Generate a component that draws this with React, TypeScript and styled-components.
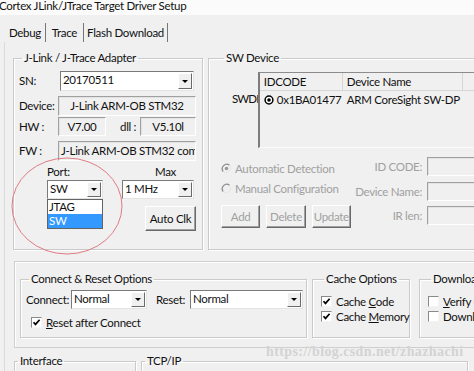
import React from 'react';
import styled, {createGlobalStyle} from 'styled-components';

const GlobalStyle = createGlobalStyle`
  html, body {
    margin: 0;
    padding: 0;
    background: #f0f0f0;
  }
`

const Screen = styled.div`
  position: relative;
  width: 474px;
  height: 371px;
  overflow: hidden;
  background: #f0f0f0;
  color: #111;
  font-family: Lato, "Noto Sans", sans-serif;
  font-size: 11.5px;
  letter-spacing: -0.3px;
`
const TitleBar = styled.div`
  height: 15px;
  line-height: 12px;
  background: #fbfbfb;
  text-indent: -1px;
  white-space: nowrap;
`
const TabStrip = styled.div`
  display: flex;
  align-items: flex-end;
  height: 27px;
  padding-left: 5px;
`
const Tab = styled.div<{$w: number}>`
  width: ${p => p.$w}px;
  height: 19px;
  line-height: 19px;
  text-align: center;
  border-right: 1px solid #767676;
  white-space: nowrap;
  box-sizing: border-box;
`
const Panel = styled.div`
  margin-left: 4px;
  padding: 9px 0 0 8px;
  border-left: 1px solid #dadada;
`
const Row = styled.div<{$gap?: number; $top?: number; $left?: number}>`
  display: flex;
  align-items: flex-start;
  gap: ${p => p.$gap ?? 0}px;
  margin-top: ${p => p.$top ?? 0}px;
  margin-left: ${p => p.$left ?? 0}px;
`
const Group = styled.fieldset<{$w: number; $h: number; $pad: string; $ml?: number}>`
  flex-shrink: 0;
  box-sizing: border-box;
  width: ${p => p.$w}px;
  height: ${p => p.$h}px;
  margin: 0 0 0 ${p => p.$ml ?? 0}px;
  padding: ${p => p.$pad};
  min-width: 0;
  border: 1px solid #cacaca;
  box-shadow: inset 1px 1px 0 #fff, 1px 1px 0 #fff;
`
const Legend = styled.legend`
  margin-left: 3px;
  padding: 0 2px;
  line-height: 14px;
  white-space: nowrap;
`
const InfoGrid = styled.div`
  display: grid;
  grid-template-columns: 39px 1fr;
  grid-template-rows: 25px 21px 24px 20px;
  align-items: start;
`
const Label = styled.span<{$w?: number; $h?: number; $ml?: number}>`
  display: inline-block;
  ${p => (p.$w ? `width: ${p.$w}px;` : '')}
  margin-left: ${p => p.$ml ?? 0}px;
  line-height: ${p => p.$h ?? 20}px;
  white-space: nowrap;
  flex-shrink: 0;
`
const ReadField = styled.div<{$w: number; $h?: number; $center?: boolean}>`
  box-sizing: border-box;
  width: ${p => p.$w}px;
  height: ${p => p.$h ?? 20}px;
  line-height: ${p => (p.$h ?? 20) - 2}px;
  padding: 0 2px;
  text-align: ${p => (p.$center ? 'center' : 'left')};
  border: 1px solid;
  border-color: #a0a0a0 #ffffff #ffffff #a0a0a0;
  box-shadow: inset 1px 1px 0 #e3e3e3;
  overflow: hidden;
  white-space: nowrap;
  flex-shrink: 0;
`
const ComboBox = styled.div<{$w: number; $h: number; $ml?: number}>`
  box-sizing: border-box;
  display: flex;
  width: ${p => p.$w}px;
  height: ${p => p.$h}px;
  margin-left: ${p => p.$ml ?? 0}px;
  background: #fff;
  border: 1px solid;
  border-color: #7a7a7a #e3e3e3 #e3e3e3 #7a7a7a;
  flex-shrink: 0;
`
const ComboText = styled.div`
  flex: 1;
  padding-left: 2px;
  line-height: 16px;
  white-space: nowrap;
  overflow: hidden;
`
const ComboButton = styled.div`
  box-sizing: border-box;
  width: 14px;
  margin: 1px;
  background: #f0f0f0;
  border: 1px solid;
  border-color: #ffffff #696969 #696969 #ffffff;
  display: flex;
  align-items: center;
  justify-content: center;
`
const Arrow = styled.div`
  width: 0;
  height: 0;
  border-left: 3px solid transparent;
  border-right: 3px solid transparent;
  border-top: 3px solid #000;
`
const PortGrid = styled.div`
  display: grid;
  grid-template-columns: 56px 72px;
  grid-template-rows: 14px 19px 25px;
  column-gap: 19px;
  row-gap: 1px;
  margin: 4px 0 0 28px;
`
const SmallLabel = styled.span<{$ml?: number}>`
  line-height: 14px;
  margin-left: ${p => p.$ml ?? 0}px;
`
const PortCell = styled.div`
  position: relative;
`
const DropList = styled.div`
  position: absolute;
  top: 100%;
  left: 0;
  z-index: 2;
  box-sizing: border-box;
  width: 56px;
  background: #fff;
  border: 1px solid #646464;
`
const DropItem = styled.div<{$selected?: boolean}>`
  height: 14px;
  line-height: 14px;
  padding-left: 1px;
  background: ${p => (p.$selected ? '#3399ff' : '#fff')};
  color: ${p => (p.$selected ? '#fff' : '#111')};
`
const WinButton = styled.button<{$w: number; $h: number; $ml?: number; $mt?: number}>`
  box-sizing: border-box;
  width: ${p => p.$w}px;
  height: ${p => p.$h}px;
  margin: ${p => p.$mt ?? 0}px 0 0 ${p => p.$ml ?? 0}px;
  padding: 0;
  font: inherit;
  letter-spacing: inherit;
  color: #111;
  background: #f0f0f0;
  border: 1px solid;
  border-color: #ffffff #696969 #696969 #ffffff;
  box-shadow: inset -1px -1px 0 #a0a0a0;
  &:disabled {
    color: #a0a0a0;
  }
`
const DeviceRow = styled.div`
  display: flex;
  margin-left: 10px;
`
const SwdLabel = styled.div`
  width: 28px;
  overflow: hidden;
  padding: 18px 0 0 1px;
  box-sizing: border-box;
  line-height: 17px;
  letter-spacing: -0.9px;
  white-space: nowrap;
`
const Table = styled.div`
  box-sizing: border-box;
  width: 260px;
  height: 76px;
  border-top: 1px solid #8c8c8c;
  border-left: 2px solid #7c7c7c;
  border-bottom: 1px solid #fafafa;
`
const TableRow = styled.div<{$head?: boolean}>`
  display: grid;
  grid-template-columns: 83px 120px 1fr;
  height: ${p => (p.$head ? 17 : 18)}px;
  line-height: ${p => (p.$head ? 16 : 18)}px;
  ${p => (p.$head ? 'border-bottom: 1px solid #d6d6d6;' : '')}
`
const Cell = styled.div<{$head?: boolean}>`
  display: flex;
  align-items: center;
  gap: 3px;
  padding-left: 4px;
  white-space: nowrap;
  overflow: hidden;
  ${p => (p.$head ? 'border-right: 1px solid #d6d6d6;' : '')}
`
const ConfigRow = styled.div`
  display: flex;
  align-items: flex-start;
  margin-top: 9px;
`
const ConfigLeft = styled.div`
  width: 130px;
  flex-shrink: 0;
  color: #a0a0a0;
`
const RadioRow = styled.div<{$mt?: number}>`
  display: flex;
  align-items: center;
  gap: 3px;
  height: 20px;
  margin-top: ${p => p.$mt ?? 0}px;
  white-space: nowrap;
`
const ButtonRow = styled.div`
  display: flex;
  gap: 6px;
  margin-top: 7px;
`
const ConfigGrid = styled.div`
  flex: 1;
  display: grid;
  grid-template-columns: 71px 1fr;
  grid-template-rows: 25px 24px 19px;
  column-gap: 5px;
  align-items: start;
`
const RightLabel = styled.span`
  text-align: right;
  line-height: 19px;
  white-space: nowrap;
  color: #a0a0a0;
`
const EmptyField = styled.div`
  height: 19px;
  box-sizing: border-box;
  border: 1px solid;
  border-color: #a0a0a0 #ffffff #ffffff #a0a0a0;
  box-shadow: inset 1px 1px 0 #e3e3e3;
`
const OptionsFrame = styled.div`
  display: flex;
  align-items: flex-start;
  box-sizing: border-box;
  width: 480px;
  height: 87px;
  margin: 11px 0 0 1px;
  padding: 10px 0 0 5px;
  border: 1px solid #cfcfcf;
  box-shadow: inset 1px 1px 0 #fff;
`
const LineRow = styled.div<{$h?: number; $mt?: number; $ml?: number}>`
  display: flex;
  align-items: center;
  height: ${p => p.$h ?? 15}px;
  margin-top: ${p => p.$mt ?? 0}px;
  margin-left: ${p => p.$ml ?? 0}px;
  white-space: nowrap;
`
const CheckBox = styled.span`
  box-sizing: border-box;
  display: inline-flex;
  align-items: center;
  justify-content: center;
  width: 11px;
  height: 11px;
  margin-right: 4px;
  background: #fff;
  border: 1px solid;
  border-color: #8a8a8a #f4f4f4 #f4f4f4 #8a8a8a;
  flex-shrink: 0;
`
const Ellipse = styled.svg`
  position: absolute;
  left: 0;
  top: 0;
  pointer-events: none;
  z-index: 3;
`
const Watermark = styled.div`
  position: absolute;
  left: 266px;
  top: 344px;
  font-family: "Liberation Serif", serif;
  font-weight: bold;
  font-size: 14px;
  letter-spacing: 0.4px;
  color: #d3d3d3;
  white-space: nowrap;
`
const U = styled.span`
  text-decoration: underline;
`

const Combo = ({value, w, h = 20, ml}: {value: string; w: number; h?: number; ml?: number}) => (
  <ComboBox $w={w} $h={h} $ml={ml}>
    <ComboText>{value}</ComboText>
    <ComboButton><Arrow /></ComboButton>
  </ComboBox>
)

const Check = ({checked}: {checked?: boolean}) => (
  <CheckBox>
    {checked && (
      <svg width="9" height="9" viewBox="0 0 9 9">
        <path d="M1.5 4.2 L3.5 6.4 L7.6 1.8" fill="none" stroke="#000" strokeWidth="1.7" />
      </svg>
    )}
  </CheckBox>
)

const Radio = ({checked}: {checked?: boolean}) => (
  <svg width="11" height="11" viewBox="0 0 11 11">
    <path d="M8.5 2.2 A4.5 4.5 0 0 0 2.2 8.5" fill="none" stroke="#8e8e8e" strokeWidth="1.3" />
    <path d="M8.8 2.5 A4.5 4.5 0 0 1 2.5 8.8" fill="none" stroke="#e6e6e6" strokeWidth="1" />
    {checked && <circle cx="5.5" cy="5.5" r="1.8" fill="#9a9a9a" />}
  </svg>
)

const Selected = () => (
  <svg width="10" height="10" viewBox="0 0 10 10">
    <circle cx="5" cy="5" r="3.9" fill="#fff" stroke="#000" strokeWidth="1.5" />
    <circle cx="5" cy="5" r="1.8" fill="#000" />
  </svg>
)

export default function App() {
  return (
    <Screen>
      <GlobalStyle />
      <TitleBar>Cortex JLink/JTrace Target Driver Setup</TitleBar>
      <TabStrip>
        <Tab $w={41}>Debug</Tab>
        <Tab $w={38}>Trace</Tab>
        <Tab $w={84}>Flash Download</Tab>
      </TabStrip>
      <Panel>
        <Row $gap={5}>
          <Group $w={190} $h={199} $pad="6px 5px 0 5px">
            <Legend>J-Link / J-Trace Adapter</Legend>
            <InfoGrid>
              <Label>SN:</Label>
              <Combo value="20170511" w={134} ml={2} />
              <Label>Device:</Label>
              <ReadField $w={138} $center>J-Link ARM-OB STM32</ReadField>
              <Label $h={19}>HW :</Label>
              <LineRow $h={19}>
                <ReadField $w={48} $h={19} $center>V7.00</ReadField>
                <Label $w={20} $h={19} $ml={14}>dll :</Label>
                <ReadField $w={56} $h={19} $center>V5.10l</ReadField>
              </LineRow>
              <Label>FW :</Label>
              <ReadField $w={138}>J-Link ARM-OB STM32 compiled</ReadField>
            </InfoGrid>
            <PortGrid>
              <SmallLabel>Port:</SmallLabel>
              <SmallLabel $ml={33}>Max</SmallLabel>
              <PortCell>
                <Combo value="SW" w={56} h={19} />
                <DropList>
                  <DropItem>JTAG</DropItem>
                  <DropItem $selected>SW</DropItem>
                </DropList>
              </PortCell>
              <Combo value="1 MHz" w={72} h={19} />
              <span />
              <WinButton $w={51} $h={25} $ml={23} $mt={6}>Auto Clk</WinButton>
            </PortGrid>
          </Group>

          <Group $w={300} $h={199} $pad="7px 0 0 12px">
            <Legend>SW Device</Legend>
            <DeviceRow>
              <SwdLabel>SWDIO</SwdLabel>
              <Table>
                <TableRow $head>
                  <Cell $head>IDCODE</Cell>
                  <Cell $head>Device Name</Cell>
                  <Cell />
                </TableRow>
                <TableRow>
                  <Cell><Selected />0x1BA01477</Cell>
                  <Cell>ARM CoreSight SW-DP</Cell>
                  <Cell />
                </TableRow>
              </Table>
            </DeviceRow>
            <ConfigRow>
              <ConfigLeft>
                <RadioRow $mt={1}><Radio checked />Automatic Detection</RadioRow>
                <RadioRow><Radio />Manual Configuration</RadioRow>
                <ButtonRow>
                  <WinButton $w={45} $h={23} disabled>Add</WinButton>
                  <WinButton $w={45} $h={23} disabled>Delete</WinButton>
                  <WinButton $w={45} $h={23} disabled>Update</WinButton>
                </ButtonRow>
              </ConfigLeft>
              <ConfigGrid>
                <RightLabel>ID CODE:</RightLabel>
                <EmptyField />
                <RightLabel>Device Name:</RightLabel>
                <EmptyField />
                <RightLabel>IR len:</RightLabel>
                <EmptyField />
              </ConfigGrid>
            </ConfigRow>
          </Group>
        </Row>

        <OptionsFrame>
          <Group $w={287} $h={66} $pad="4px 5px 0 5px">
            <Legend>Connect &amp; Reset Options</Legend>
            <LineRow $h={19}>
              <Label $w={45} $h={19}>Connect:</Label>
              <Combo value="Normal" w={76} h={19} />
              <Label $w={34} $h={19} $ml={9}>Reset:</Label>
              <Combo value="Normal" w={113} h={19} />
            </LineRow>
            <LineRow $mt={6} $ml={5}>
              <Check checked /><span><U>R</U>eset after Connect</span>
            </LineRow>
          </Group>
          <Group $w={98} $h={66} $pad="8px 0 0 8px" $ml={5}>
            <Legend>Cache Options</Legend>
            <LineRow><Check checked /><span>Cache <U>C</U>ode</span></LineRow>
            <LineRow><Check checked /><span>Cache <U>M</U>emory</span></LineRow>
          </Group>
          <Group $w={120} $h={66} $pad="8px 0 0 8px" $ml={9}>
            <Legend>Download Options</Legend>
            <LineRow><Check /><span><U>V</U>erify Code Download</span></LineRow>
            <LineRow><Check /><span>Download to Flash</span></LineRow>
          </Group>
        </OptionsFrame>

        <Row $gap={5} $top={6} $left={1}>
          <Group $w={122} $h={60} $pad="0">
            <Legend>Interface</Legend>
          </Group>
          <Group $w={327} $h={60} $pad="0">
            <Legend>TCP/IP</Legend>
          </Group>
        </Row>
      </Panel>

      <Ellipse width="474" height="371" viewBox="0 0 474 371">
        <ellipse cx="67" cy="206" rx="55" ry="48" fill="none" stroke="#e07b84" strokeWidth="1" />
      </Ellipse>
      <Watermark>https://blog.csdn.net/zhazhachi</Watermark>
    </Screen>
  );
}
